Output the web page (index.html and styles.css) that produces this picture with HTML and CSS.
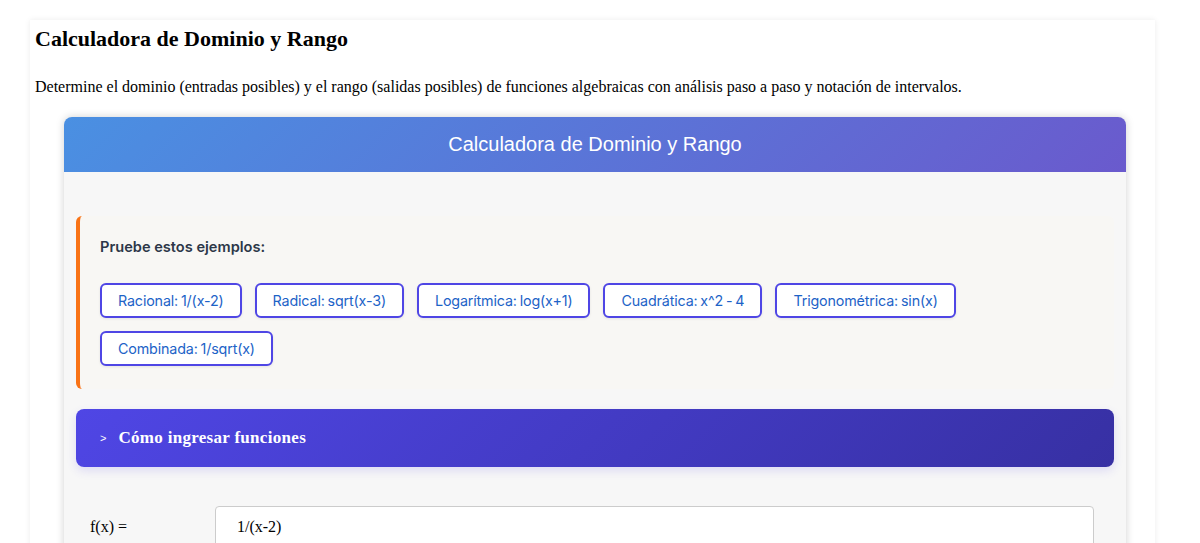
FILE: index.html
```html
<!DOCTYPE html>
<html lang="es">

<head>
    <meta charset="UTF-8">
    <meta name="viewport" content="width=device-width, initial-scale=1.0">
    <title>Calculadora de Dominio y Rango</title>
    <link rel="stylesheet" href="styles.css">
</head>

<body>
    <div class="page">
        <h1 class="page-title">Calculadora de Dominio y Rango</h1>
        <p class="intro">Determine el dominio (entradas posibles) y el rango (salidas posibles) de funciones algebraicas con análisis paso a paso y notación de intervalos.</p>

        <div class="calc">
            <div class="calc-header">Calculadora de Dominio y Rango</div>
            <div class="calc-body">
                <div class="examples">
                    <div class="examples-title">Pruebe estos ejemplos:</div>
                    <div class="example-list">
                        <button class="example-btn">Racional: 1/(x-2)</button>
                        <button class="example-btn">Radical: sqrt(x-3)</button>
                        <button class="example-btn">Logarítmica: log(x+1)</button>
                        <button class="example-btn">Cuadrática: x^2 - 4</button>
                        <button class="example-btn">Trigonométrica: sin(x)</button>
                        <button class="example-btn">Combinada: 1/sqrt(x)</button>
                    </div>
                </div>

                <div class="howto">
                    <span class="howto-arrow">&gt;</span>
                    <span class="howto-title">Cómo ingresar funciones</span>
                </div>

                <div class="form-row">
                    <label class="form-label" for="fx">f(x) =</label>
                    <input type="text" id="fx" class="form-input" value="1/(x-2)">
                </div>
                <div class="form-row">
                    <label class="form-label" for="var">Variable:</label>
                    <input type="text" id="var" class="form-input" value="x">
                </div>
                <div class="actions">
                    <button class="calc-btn">Calcular</button>
                    <button class="calc-btn secondary">Limpiar</button>
                </div>
                <div class="results">
                    <h3>Resultados</h3>
                    <p>Ingrese una función y presione "Calcular" para ver el dominio y el rango.</p>
                </div>
            </div>
        </div>
    </div>
</body>

</html>
```

FILE: styles.css
```css
body {
    margin: 0;
    padding-right: 15px;
    font-family: "Liberation Serif", "Times New Roman", serif;
    background-color: #fff;
}

.page {
    width: 1115px;
    margin: 20px auto 40px;
    padding: 6px 5px 30px;
    background-color: #fff;
    box-shadow: 0 0 6px rgba(0, 0, 0, 0.08);
}

.page-title {
    margin: 0;
    font-size: 22px;
    line-height: 25px;
}

.intro {
    margin: 27px 0 0;
    font-size: 16px;
    line-height: 18px;
}

.calc {
    margin: 21px 24px 0 29px;
    border-radius: 8px;
    background-color: #f7f7f7;
    box-shadow: 0 0 8px rgba(0, 0, 0, 0.18);
    overflow: hidden;
}

.calc-header {
    height: 55px;
    display: flex;
    align-items: center;
    justify-content: center;
    background: linear-gradient(135deg, #4a90e2, #6a5acd);
    color: #fff;
    font-family: "Liberation Sans", Arial, sans-serif;
    font-size: 20px;
}

.calc-body {
    padding: 44px 12px 40px;
}

.examples {
    padding: 20px;
    border-left: 4px solid #f97316;
    border-radius: 6px;
    background-color: #f8f7f4;
    height: 133px;
}

.examples-title {
    font-family: Inter, "Noto Sans", sans-serif;
    font-size: 14.6px;
    font-weight: 600;
    color: #2d3748;
    line-height: 22px;
}

.example-list {
    display: flex;
    flex-wrap: wrap;
    gap: 13px;
    margin-top: 25px;
}

.example-btn {
    height: 35px;
    padding: 0 16px;
    border: 2px solid #4f46e5;
    border-radius: 6px;
    background-color: #fff;
    color: #1d63c7;
    font-family: Inter, "Noto Sans", sans-serif;
    font-size: 14.3px;
    letter-spacing: -0.15px;
    word-spacing: -1px;
    box-shadow: 0 1px 3px rgba(0, 0, 0, 0.08);
    cursor: pointer;
}

.howto {
    margin-top: 20px;
    height: 58px;
    display: flex;
    align-items: center;
    gap: 12px;
    padding-left: 24px;
    border-radius: 8px;
    background: linear-gradient(135deg, #4f46e5, #3730a3);
    box-shadow: 0 4px 10px rgba(79, 70, 229, 0.15);
    color: #fff;
}

.howto-arrow {
    font-family: "Liberation Sans", Arial, sans-serif;
    font-size: 11px;
}

.howto-title {
    font-size: 17px;
    font-weight: bold;
    letter-spacing: 0.3px;
}

.form-row {
    display: flex;
    align-items: center;
    margin: 39px 20px 0 14px;
}

.form-label {
    width: 125px;
    font-size: 16px;
}

.form-input {
    flex: 1;
    height: 42px;
    box-sizing: border-box;
    padding: 0 21px;
    border: 1px solid #ccc;
    border-radius: 4px;
    background-color: #fff;
    font-family: "Liberation Serif", "Times New Roman", serif;
    font-size: 16px;
}

.form-row + .form-row {
    margin-top: 16px;
}

.actions {
    display: flex;
    justify-content: center;
    gap: 16px;
    margin-top: 30px;
}

.calc-btn {
    padding: 12px 32px;
    border: none;
    border-radius: 6px;
    background: linear-gradient(135deg, #4a90e2, #6a5acd);
    color: #fff;
    font-family: "Liberation Sans", Arial, sans-serif;
    font-size: 16px;
    cursor: pointer;
}

.calc-btn.secondary {
    background: #9ca3af;
}

.results {
    margin-top: 30px;
    min-height: 900px;
    padding: 20px;
    border-radius: 6px;
    background-color: #fff;
}
```
